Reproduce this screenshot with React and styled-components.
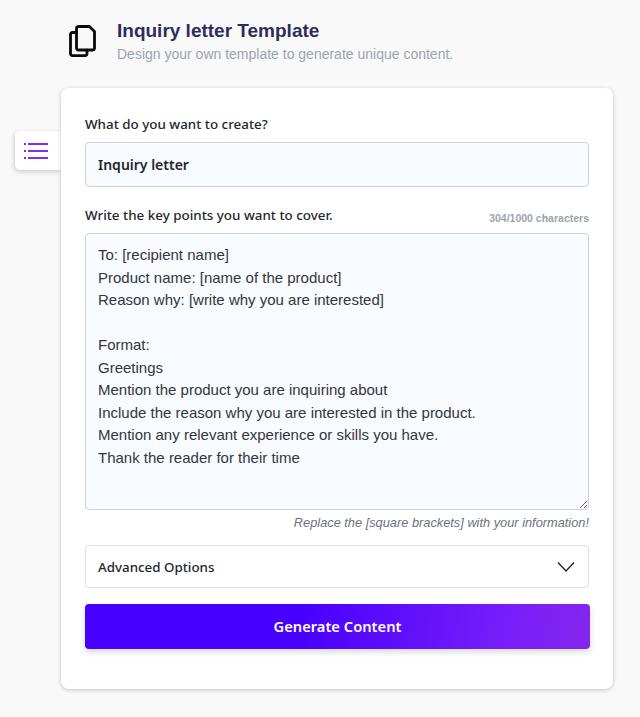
import styled, { createGlobalStyle } from "styled-components";

const GlobalStyle = createGlobalStyle`
  html, body {
    margin: 0;
    padding: 0;
    background: #f9f9fa;
    font-family: "Liberation Sans", Arial, sans-serif;
  }
  * { box-sizing: border-box; }
`;

const TEMPLATE = `To: [recipient name]
Product name: [name of the product]
Reason why: [write why you are interested]

Format:
Greetings
Mention the product you are inquiring about
Include the reason why you are interested in the product.
Mention any relevant experience or skills you have.
Thank the reader for their time`;

const App = () => {
  return (
    <Page>
      <GlobalStyle />
      <Header>
        <CopyIcon viewBox="0 0 28 33" fill="none">
          <path
            d="M9.500 1.500h11l5 5v16.500a2 2 0 0 1-2 2H9.500a2 2 0 0 1-2-2V3.500a2 2 0 0 1 2-2Z"
            stroke="#0a0a0a"
            strokeWidth="2.800"
            strokeLinejoin="round"
          />
          <path
            d="M7.500 7.500H3.500a2 2 0 0 0-2 2V28.600a2 2 0 0 0 2 2h12.500a2 2 0 0 0 2-2v-3.500"
            stroke="#0a0a0a"
            strokeWidth="2.800"
            strokeLinecap="round"
            strokeLinejoin="round"
          />
        </CopyIcon>
        <div>
          <Title>Inquiry letter Template</Title>
          <Subtitle>Design your own template to generate unique content.</Subtitle>
        </div>
      </Header>
      <CardRow>
        <SideTab>
          <svg width="26" height="18" viewBox="0 0 26 18" fill="none" stroke="#8a2be2" strokeWidth="2">
            <path d="M1 2h2M1 9h2M1 16h2" />
            <path d="M5 2h20M5 9h20M5 16h20" />
          </svg>
        </SideTab>
        <Card>
          <Label>What do you want to create?</Label>
          <TitleInput defaultValue="Inquiry letter" />
          <LabelRow>
            <Label>Write the key points you want to cover.</Label>
            <Counter>304/1000 characters</Counter>
          </LabelRow>
          <PointsArea defaultValue={TEMPLATE} />
          <Hint>Replace the [square brackets] with your information!</Hint>
          <Accordion>
            <span>Advanced Options</span>
            <svg width="18" height="12" viewBox="0 0 18 12" fill="none" stroke="#222" strokeWidth="1.400">
              <path d="M1 1.500l8 8.500 8-8.500" />
            </svg>
          </Accordion>
          <GenerateButton>Generate Content</GenerateButton>
        </Card>
      </CardRow>
    </Page>
  );
};

export default App;

const Page = styled.div`
  width: 640px;
  height: 717px;
  padding: 20px 27px 0 15px;
  overflow: hidden;
`;

const Header = styled.header`
  display: flex;
  align-items: center;
  gap: 20px;
  height: 44px;
  margin-left: 54px;
`;

const CopyIcon = styled.svg`
  width: 28px;
  height: 33px;
  margin-top: -1px;
  flex: none;
`;

const Title = styled.h1`
  margin: 0;
  font-size: 19px;
  line-height: 22px;
  font-weight: 700;
  color: #2d2e5c;
`;

const Subtitle = styled.p`
  margin: 2px 0 0;
  font-size: 14px;
  line-height: 20px;
  color: #9ca3af;
`;

const CardRow = styled.div`
  display: flex;
  align-items: flex-start;
  margin-top: 24px;
`;

const SideTab = styled.div`
  width: 46px;
  height: 39px;
  margin-top: 43px;
  padding-right: 4px;
  flex: none;
  display: flex;
  align-items: center;
  justify-content: center;
  background: #fff;
  border-radius: 5px 0 0 5px;
  box-shadow: -1px 2px 5px rgba(0, 0, 0, 0.18);
`;

const Card = styled.main`
  width: 552px;
  height: 601px;
  padding: 19px 24px 0;
  background: #fff;
  border-radius: 8px;
  box-shadow: 0 1px 4px rgba(0, 0, 0, 0.22);
`;

const Label = styled.label`
  display: block;
  height: 35px;
  font-family: "Noto Sans", sans-serif;
  font-size: 13.400px;
  line-height: 34px;
  font-weight: 500;
  color: #24262e;
`;

const TitleInput = styled.input`
  display: block;
  width: 504px;
  height: 45px;
  padding: 0 12px;
  font-family: "Noto Sans", sans-serif;
  font-size: 14px;
  font-weight: 600;
  color: #24262e;
  background: #f8fbff;
  border: 1px solid #cbd2dc;
  border-radius: 4px;
  outline: none;
`;

const LabelRow = styled.div`
  display: flex;
  align-items: center;
  justify-content: space-between;
  width: 504px;
  margin-top: 11px;
`;

const Counter = styled.span`
  margin-top: 5px;
  font-size: 10.500px;
  font-weight: 700;
  color: #9ca3af;
`;

const PointsArea = styled.textarea`
  display: block;
  width: 504px;
  height: 277px;
  padding: 10px 12px;
  margin: 0;
  font-family: "Liberation Sans", Arial, sans-serif;
  font-size: 15px;
  line-height: 22.500px;
  color: #33363d;
  background: #f8fbff;
  border: 1px solid #cbd2dc;
  border-radius: 4px;
  outline: none;
`;

const Hint = styled.p`
  width: 504px;
  margin: 4px 0 0;
  text-align: right;
  font-size: 12.800px;
  line-height: 17px;
  font-style: italic;
  color: #6b7280;
`;

const Accordion = styled.div`
  display: flex;
  align-items: center;
  justify-content: space-between;
  width: 504px;
  height: 43px;
  margin-top: 14px;
  padding: 0 13px 0 12px;
  font-family: "Noto Sans", sans-serif;
  font-size: 13.350px;
  font-weight: 500;
  color: #24262e;
  background: #fff;
  border: 1px solid #e2e2e4;
  border-radius: 4px;
`;

const GenerateButton = styled.button`
  display: block;
  width: 505px;
  height: 45px;
  margin-top: 16px;
  padding: 0 0 2px;
  font-family: "Noto Sans", sans-serif;
  font-size: 14.700px;
  font-weight: 600;
  color: #fff;
  background: linear-gradient(100deg, #4700ff 0%, #4700ff 42%, #7a1ff8 85%, #8526ee 100%);
  border: none;
  border-radius: 4px;
  box-shadow: 0 3px 6px rgba(0, 0, 0, 0.16);
`;
